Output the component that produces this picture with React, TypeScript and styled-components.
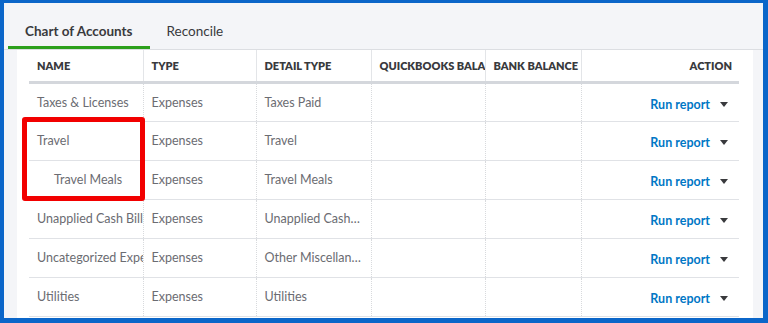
import styled, { createGlobalStyle } from "styled-components";

const GlobalStyle = createGlobalStyle`
  html, body {
    margin: 0;
    padding: 0;
    background: #ffffff;
  }
  * {
    box-sizing: border-box;
  }
`;

const Frame = styled.div`
  position: relative;
  width: 768px;
  height: 323px;
  overflow: hidden;
  border-style: solid;
  border-color: #0b66c9;
  border-width: 3px 5px 5px 4px;
  background: #f4f5f8;
  font-family: Lato, "Open Sans", sans-serif;
  display: flex;
  flex-direction: column;
`;

const TabBar = styled.div`
  display: flex;
  padding-left: 4px;
  border-bottom: 1px solid #dcdee2;
  flex-shrink: 0;
`;

const Tab = styled.div<{ $active?: boolean }>`
  height: 46px;
  padding: 18px 17px 0;
  font-size: 13.5px;
  line-height: 20px;
  color: #393a3d;
  font-weight: ${(p) => (p.$active ? 700 : 400)};
  border-bottom: 3px solid ${(p) => (p.$active ? "#2ca01c" : "transparent")};
`;

const Panel = styled.div`
  flex: 1;
  margin: 0 10px 0 13px;
  padding: 0 14px 0 12px;
  background: #ffffff;
`;

const Table = styled.table`
  border-collapse: collapse;
  table-layout: fixed;
  width: 710px;
`;

const HeadCell = styled.th<{ $right?: boolean; $first?: boolean }>`
  height: 32px;
  padding: 0 ${(p) => (p.$right ? "7px" : "8px")} 0 8px;
  border-bottom: 3px solid #d4d7dc;
  border-left: ${(p) => (p.$first ? "none" : "1px solid #e3e5e8")};
  text-align: ${(p) => (p.$right ? "right" : "left")};
  font-size: 11px;
  font-weight: 800;
  color: #393a3d;
  text-transform: uppercase;
  white-space: nowrap;
  overflow: hidden;
  text-overflow: clip;
`;

const Row = styled.tr`
  height: 39px;
`;

const Cell = styled.td<{ $first?: boolean; $ellipsis?: boolean; $indent?: boolean }>`
  padding: 0 8px 0 ${(p) => (p.$indent ? "25px" : "8px")};
  border-bottom: 1px solid #e0e2e6;
  border-left: ${(p) => (p.$first ? "none" : "1px dotted #d8dadd")};
  font-size: 12.5px;
  color: #6b6c72;
  white-space: nowrap;
  overflow: hidden;
  text-overflow: ${(p) => (p.$ellipsis ? "ellipsis" : "clip")};
`;

const ActionCell = styled.td`
  padding: 0 11px 0 8px;
  border-bottom: 1px solid #e0e2e6;
  border-left: 1px dotted #d8dadd;
  text-align: right;
  white-space: nowrap;
`;

const RunReport = styled.span`
  color: #0077c5;
  font-size: 12.5px;
  font-weight: 700;
`;

const Caret = styled.span`
  display: inline-block;
  margin-left: 10px;
  width: 0;
  height: 0;
  border-left: 4.5px solid transparent;
  border-right: 4.5px solid transparent;
  border-top: 5px solid #393a3d;
  vertical-align: middle;
`;

const Highlight = styled.div`
  position: absolute;
  left: 18px;
  top: 114px;
  width: 123px;
  height: 84px;
  border: 5px solid #f20000;
  border-radius: 3px;
`;

const columns = [114, 113, 115, 114, 96, 158];

const rows = [
  { name: "Taxes & Licenses", detail: "Taxes Paid" },
  { name: "Travel", detail: "Travel" },
  { name: "Travel Meals", detail: "Travel Meals", indent: true },
  { name: "Unapplied Cash Bill Payment Expense", detail: "Unapplied Cash Bill Payment Expense" },
  { name: "Uncategorized Expense", detail: "Other Miscellaneous Service Cost" },
  { name: "Utilities", detail: "Utilities" },
];

export default function App() {
  return (
    <>
      <GlobalStyle />
      <Frame>
        <TabBar>
          <Tab $active>Chart of Accounts</Tab>
          <Tab>Reconcile</Tab>
        </TabBar>
        <Panel>
          <Table>
            <colgroup>
              {columns.map((w, i) => (
                <col key={i} style={{ width: w }} />
              ))}
            </colgroup>
            <thead>
              <tr>
                <HeadCell $first>Name</HeadCell>
                <HeadCell>Type</HeadCell>
                <HeadCell>Detail type</HeadCell>
                <HeadCell>QuickBooks Balance</HeadCell>
                <HeadCell>Bank Balance</HeadCell>
                <HeadCell $right>Action</HeadCell>
              </tr>
            </thead>
            <tbody>
              {rows.map((r) => (
                <Row key={r.name}>
                  <Cell $first $indent={r.indent}>
                    {r.name}
                  </Cell>
                  <Cell>Expenses</Cell>
                  <Cell $ellipsis>{r.detail}</Cell>
                  <Cell />
                  <Cell />
                  <ActionCell>
                    <RunReport>Run report</RunReport>
                    <Caret />
                  </ActionCell>
                </Row>
              ))}
            </tbody>
          </Table>
        </Panel>
        <Highlight />
      </Frame>
    </>
  );
}
